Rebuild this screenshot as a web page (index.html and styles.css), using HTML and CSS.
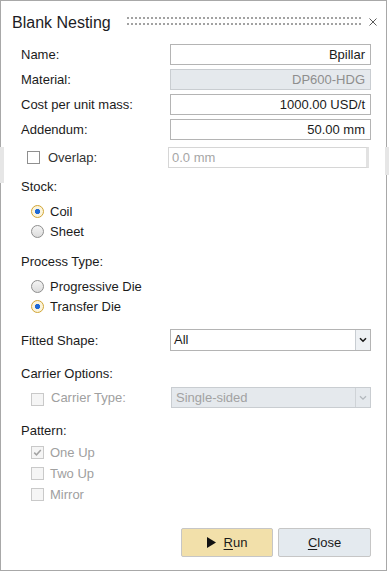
FILE: index.html
```html
<!DOCTYPE html>
<html>
<head>
<meta charset="utf-8">
<link rel="stylesheet" href="styles.css">
</head>
<body>
<div class="window">
  <div class="titlebar">
    <span class="title">Blank Nesting</span>
    <span class="grip"></span>
    <svg class="close" width="8" height="8" viewBox="0 0 8 8"><path d="M0.5 0.5 L7.5 7.5 M7.5 0.5 L0.5 7.5" stroke="#5a5a5a" stroke-width="1" fill="none"/></svg>
  </div>
  <div class="content">
    <div class="field first"><span class="label">Name:</span><div class="input">Bpillar</div></div>
    <div class="field"><span class="label">Material:</span><div class="input disabled">DP600-HDG</div></div>
    <div class="field"><span class="label">Cost per unit mass:</span><div class="input">1000.00 USD/t</div></div>
    <div class="field"><span class="label">Addendum:</span><div class="input">50.00 mm</div></div>
    <div class="field overlap">
      <span class="group"><span class="check"></span><span class="label-sm">Overlap:</span></span>
      <div class="input off">0.0 mm</div>
    </div>

    <div class="heading h-stock">Stock:</div>
    <div class="options">
      <div class="option"><span class="radio on"></span><span>Coil</span></div>
      <div class="option"><span class="radio"></span><span>Sheet</span></div>
    </div>

    <div class="heading h-process">Process Type:</div>
    <div class="options">
      <div class="option"><span class="radio"></span><span>Progressive Die</span></div>
      <div class="option"><span class="radio on"></span><span>Transfer Die</span></div>
    </div>

    <div class="field fitted"><span class="label">Fitted Shape:</span>
      <div class="select"><span class="sel-text">All</span><span class="sel-btn"><svg width="8" height="6" viewBox="0 0 8 6"><path d="M1 1.2 L4 4.2 L7 1.2" stroke="#1a1a1a" stroke-width="1.6" fill="none"/></svg></span></div>
    </div>

    <div class="heading h-carrier">Carrier Options:</div>
    <div class="field carrier">
      <span class="group wide"><span class="check dis"></span><span class="label-sm gray">Carrier Type:</span></span>
      <div class="select dis"><span class="sel-text">Single-sided</span><span class="sel-btn"><svg width="8" height="6" viewBox="0 0 8 6"><path d="M1 1.2 L4 4.2 L7 1.2" stroke="#b3b8bd" stroke-width="1.3" fill="none"/></svg></span></div>
    </div>

    <div class="heading h-pattern">Pattern:</div>
    <div class="checks">
      <div class="crow"><span class="check dis"><svg width="11" height="11" viewBox="0 0 11 11"><path d="M2.2 5.6 L4.5 7.8 L8.8 3" stroke="#a3a3a3" stroke-width="1.5" fill="none"/></svg></span><span class="gray">One Up</span></div>
      <div class="crow"><span class="check dis"></span><span class="gray">Two Up</span></div>
      <div class="crow"><span class="check dis"></span><span class="gray">Mirror</span></div>
    </div>
  </div>
  <div class="buttons">
    <div class="btn run"><svg width="9" height="11" viewBox="0 0 9 11"><path d="M0 0 L9 5.5 L0 11 Z" fill="#111"/></svg><span><u>R</u>un</span></div>
    <div class="btn close-btn"><span><u>C</u>lose</span></div>
  </div>
</div>
<div class="band band-left"></div>
<div class="band band-right"></div>
</body>
</html>
```

FILE: styles.css
```css
html, body {
  margin: 0;
  padding: 0;
  background: #ffffff;
}
body {
  font-family: "Liberation Sans", Arial, sans-serif;
  font-size: 13px;
  color: #1b1b1b;
  position: relative;
  width: 390px;
  height: 572px;
  overflow: hidden;
}
.window {
  width: 387px;
  height: 571px;
  box-sizing: border-box;
  border: 1px solid #a8a8a8;
  background: #fff;
  display: flex;
  flex-direction: column;
}
.titlebar {
  height: 43px;
  display: flex;
  align-items: center;
  padding-left: 11px;
  flex-shrink: 0;
}
.title {
  font-size: 16px;
  color: #1c1c24;
  white-space: nowrap;
}
.grip {
  align-self: flex-start;
  margin-top: 16px;
  margin-left: 16px;
  width: 234px;
  height: 8px;
  background-image: radial-gradient(circle at 1px 1px, #a2a2a2 0.8px, transparent 1.1px);
  background-size: 4px 6px;
}
.close {
  margin-left: 8px;
  align-self: flex-start;
  margin-top: 17px;
}
.content {
  padding-left: 20px;
  display: flex;
  flex-direction: column;
}
.field {
  display: flex;
  align-items: center;
  height: 21px;
  margin-top: 4px;
}
.field.first { margin-top: 0; }
.label {
  width: 149px;
  flex-shrink: 0;
  white-space: nowrap;
}
.input {
  width: 201px;
  height: 21px;
  box-sizing: border-box;
  border: 1px solid #b4b4b4;
  text-align: right;
  padding-right: 5px;
  line-height: 19px;
  color: #1b1b1b;
  white-space: nowrap;
}
.input.disabled {
  background: #e5e9ed;
  border-color: #c9cdd1;
  color: #8e8e8e;
}
.field.overlap {
  margin-top: 7px;
}
.group {
  width: 147px;
  display: flex;
  align-items: center;
  flex-shrink: 0;
}
.group .check { margin-left: 6px; }
.label-sm {
  margin-left: 8px;
  color: #333;
}
.input.off {
  border-color: #d6d6d6;
  border-right: 3px solid #e2e2e2;
  text-align: left;
  padding-left: 3px;
  color: #a6a6a6;
}
.check {
  width: 13px;
  height: 13px;
  box-sizing: border-box;
  border: 1px solid #8f8f8f;
  background: #fff;
  flex-shrink: 0;
  display: flex;
  align-items: center;
  justify-content: center;
}
.check.dis {
  border-color: #c9c9c9;
  background: #f5f5f5;
}
.gray { color: #a0a0a0; }
.heading {
  height: 16px;
  line-height: 16px;
}
.h-stock { margin-top: 11px; }
.h-process { margin-top: 13px; }
.h-carrier { margin-top: 15px; }
.h-pattern { margin-top: 15px; }
.options {
  margin-top: 6px;
  display: flex;
  flex-direction: column;
}
.option {
  height: 20px;
  display: flex;
  align-items: center;
  padding-left: 10px;
}
.radio {
  width: 13px;
  height: 13px;
  box-sizing: border-box;
  border-radius: 50%;
  border: 1px solid #8e8e8e;
  background: linear-gradient(#f4f4f4, #dcdcdc);
  margin-right: 6px;
  flex-shrink: 0;
}
.radio.on {
  border-color: #d1a534;
  background: radial-gradient(circle, #1f6ad6 0 2.4px, #fbf4dc 2.9px);
}
.field.fitted {
  margin-top: 13px;
  height: 22px;
}
.select {
  width: 201px;
  height: 22px;
  box-sizing: border-box;
  border: 1px solid #b4b4b4;
  display: flex;
  align-items: stretch;
}
.sel-text {
  flex: 1;
  padding-left: 3px;
  line-height: 20px;
}
.sel-btn {
  width: 14px;
  border-left: 1px solid #c8cdd2;
  background: #eef1f4;
  display: flex;
  align-items: center;
  justify-content: center;
}
.field.carrier {
  margin-top: 5px;
}
.group.wide { width: 150px; }
.group.wide .check { margin-left: 10px; margin-top: 4px; }
.group.wide .label-sm { margin-left: 7px; color: #a0a0a0; }
.select.dis {
  width: 200px;
  height: 21px;
  background: #e5e9ed;
  border-color: #c9cdd1;
  color: #a2a2a2;
}
.select.dis .sel-text { padding-left: 4px; line-height: 19px; }
.select.dis .sel-btn { background: #e5e9ed; border-left-color: #cfd3d7; }
.checks {
  margin-top: 3px;
  display: flex;
  flex-direction: column;
}
.crow {
  height: 21px;
  display: flex;
  align-items: center;
  padding-left: 10px;
}
.crow .check { margin-right: 6px; }
.buttons {
  margin-top: 23px;
  display: flex;
  justify-content: flex-end;
  gap: 5px;
  padding-right: 15px;
}
.btn {
  height: 29px;
  box-sizing: border-box;
  border: 1px solid #c6c6c6;
  border-radius: 2px;
  display: flex;
  align-items: center;
  justify-content: center;
  gap: 8px;
  font-size: 13px;
  color: #1a1a1a;
}
.btn u { text-underline-offset: 2px; }
.run {
  width: 92px;
  background: #f2e0aa;
}
.close-btn {
  width: 93px;
  background: #e4eaef;
}
.band {
  position: absolute;
  background: #e6e6e6;
}
.band-left {
  left: 0;
  top: 147px;
  width: 4px;
  height: 36px;
}
.band-right {
  left: 385px;
  top: 147px;
  width: 4px;
  height: 28px;
}
```
